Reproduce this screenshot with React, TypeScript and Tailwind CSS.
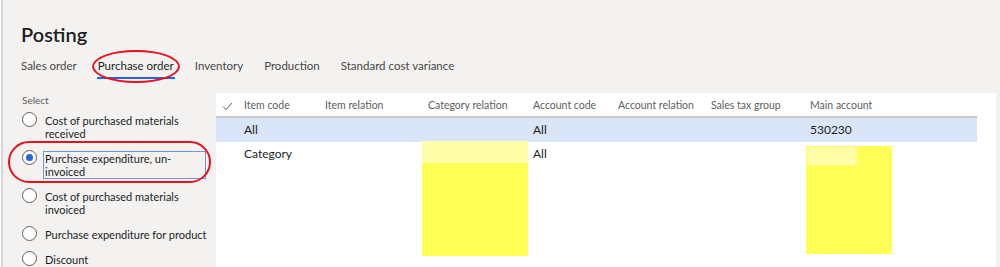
import React from 'react'

const tabs = ['Sales order', 'Purchase order', 'Inventory', 'Production', 'Standard cost variance']

const options = [
  'Cost of purchased materials received',
  'Purchase expenditure, un-invoiced',
  'Cost of purchased materials invoiced',
  'Purchase expenditure for product',
  'Discount',
]

const cols = [
  { label: 'Item code', w: 'w-[81px]' },
  { label: 'Item relation', w: 'w-[103px]' },
  { label: 'Category relation', w: 'w-[105px]' },
  { label: 'Account code', w: 'w-[85px]' },
  { label: 'Account relation', w: 'w-[93px]' },
  { label: 'Sales tax group', w: 'w-[99px]' },
  { label: 'Main account', w: 'w-[120px]' },
]

function Row({ cells, selected }: { cells: string[]; selected?: boolean }) {
  return (
    <div className={`flex h-[24px] w-[761px] items-center text-[12px] text-[#201f1e] ${selected ? 'bg-[#dbe5f8]' : ''}`}>
      <div className="w-[28px]" />
      {cols.map((c, i) => (
        <div key={c.label} className={`${c.w} shrink-0`}>{cells[i]}</div>
      ))}
    </div>
  )
}

export default function App() {
  return (
    <div
      className="relative ml-px h-[267px] w-[999px] overflow-hidden border-l-2 border-[#d9d9d9] bg-[#f3f2f1]"
      style={{ fontFamily: 'Lato, "Noto Sans", sans-serif' }}
    >
      {/* Title */}
      <h1 className="pl-[18px] pt-[21px] text-[20px] font-semibold leading-[26px] text-[#201f1e]">Posting</h1>

      {/* Tabs */}
      <div className="mt-[12px] flex gap-[21px] pl-[18px] text-[11.5px] leading-[14px] text-[#484644]">
        {tabs.map(t => (
          <div key={t} className={`relative pb-[6px] ${t === 'Purchase order' ? 'text-[#201f1e]' : ''}`}>
            {t}
            {t === 'Purchase order' && <div className="absolute bottom-0 left-[-1px] right-[-1px] h-[2px] bg-[#2266e3]" />}
          </div>
        ))}
      </div>

      <div className="mt-[14px] flex">
        {/* Left radio list */}
        <div className="w-[213px] shrink-0 pl-[19px] pt-[1px]">
          <div className="mb-[8px] text-[10px] leading-[12px] text-[#605e5c]">Select</div>
          <div className="flex flex-col gap-[12px]">
            {options.map((o, i) => (
              <div key={o} className="flex items-start gap-[8px]">
                <div className="mt-[-2px] flex h-[15px] w-[15px] shrink-0 items-center justify-center rounded-full border border-[#605e5c] bg-white">
                  {i === 1 && <div className="h-[7px] w-[7px] rounded-full bg-[#2266e3]" />}
                </div>
                <div
                  className={`text-[11px] leading-[13px] text-[#201f1e] ${i === 1 ? 'my-[-1px] ml-[-2px] w-[163px] border border-[#6b98e0] px-px' : 'w-[165px]'}`}
                >
                  {o}
                </div>
              </div>
            ))}
          </div>
        </div>

        {/* Grid panel */}
        <div className="h-[200px] w-[780px] shrink-0 bg-white">
          <div className="flex h-[23px] w-[761px] items-center pt-[3px] text-[10.5px] text-[#605e5c]">
            <div className="w-[28px] pl-[6px]">
              <svg width="11" height="9" viewBox="0 0 11 9" fill="none" stroke="#605e5c" strokeWidth="1">
                <path d="M1 4.5l3 3 6-6.5" />
              </svg>
            </div>
            {cols.map(c => (
              <div key={c.label} className={`${c.w} shrink-0`}>{c.label}</div>
            ))}
          </div>
          <div className="h-[2px] w-[761px] bg-[#c8c8c8]" />
          <Row cells={['All', '', '', 'All', '', '', '530230']} selected />
          <Row cells={['Category', '', '', 'All', '', '', '']} />
        </div>
      </div>

      {/* Yellow redaction blocks */}
      <div className="absolute left-[419px] top-[141px] h-[115px] w-[106px] bg-[#ffff55]">
        <div className="h-[22px] w-full bg-[#ffffaa]" />
      </div>
      <div className="absolute left-[803px] top-[146px] h-[108px] w-[86px] bg-[#ffff55]">
        <div className="ml-px mt-px h-[18px] w-[50px] bg-[#ffffaa]" />
      </div>

      {/* Red annotation outlines */}
      <div className="absolute left-[89px] top-[50px] h-[33px] w-[88px] rounded-[50%] border-2 border-[#e8121a]" />
      <div className="absolute left-[5px] top-[141px] h-[42px] w-[203px] rounded-[22px] border-2 border-[#e8121a]" />
    </div>
  )
}
